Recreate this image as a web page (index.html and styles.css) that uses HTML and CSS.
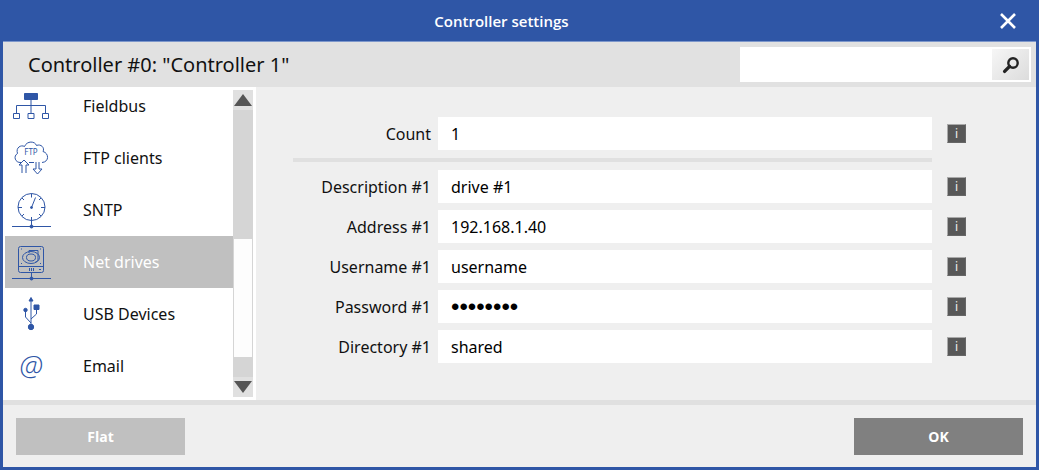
FILE: index.html
```html
<!DOCTYPE html>
<html lang="en">
<head>
    <meta charset="UTF-8">
    <meta name="viewport" content="width=device-width, initial-scale=1.0">
    <title>Controller settings</title>
    <link rel="stylesheet" href="styles.css">
</head>
<body>

<div class="window">
    <header class="titlebar">
        <span></span>
        <h1>Controller settings</h1>
        <button type="button" class="close" aria-label="Close">
            <svg width="18" height="18" viewBox="0 0 18 18"><path d="M2 2L16 16M16 2L2 16" stroke="#fff" stroke-width="2.6" fill="none"/></svg>
        </button>
    </header>

    <div class="subheader">
        <h2>Controller #0: "Controller 1"</h2>
        <form class="search" role="search">
            <input type="search" aria-label="Search">
            <button type="button" aria-label="Find">
                <svg width="18" height="18" viewBox="0 0 18 18" fill="none" stroke="#222"><circle cx="11" cy="7" r="4.7" stroke-width="2.4"/><path d="M7.6 10.4L2.6 15.4" stroke-width="3.4" stroke-linecap="round"/></svg>
            </button>
        </form>
    </div>

    <main class="content">
        <nav class="sidebar">
            <div class="menu">
                <a href="#fieldbus" class="item">
                    <svg class="icon" viewBox="0 0 40 40">
                        <path d="M13.5 7.500h13v6h-13z" fill="#2f56a6"/>
                        <path d="M20 13v14M5.500 27v-7.500h29V27M2.500 27.500h6v5h-6zM17 27.500h6v5h-6zM31.500 27.500h6v5h-6z"/>
                    </svg>
                    Fieldbus
                </a>
                <a href="#ftp" class="item">
                    <svg class="icon" viewBox="0 0 40 40">
                        <path d="M10 24.500C4 25 2 18 6.500 15.500C4.500 9.500 10 6.500 13.500 8.500C16 2.500 24 3 25.500 7.500C30 5.500 34 10 32 13.500C38 15 38.500 24 31 24.500M18 24.500h5"/>
                        <path d="M11 35v-8H8l5-5 5 5h-3v8M25 24v7h-3l4.500 5 4.500-5h-3v-7"/>
                        <text x="20" y="17" class="icon-text">FTP</text>
                    </svg>
                    FTP clients
                </a>
                <a href="#sntp" class="item">
                    <svg class="icon" viewBox="0 0 40 40">
                        <circle cx="20.500" cy="17" r="13.500"/>
                        <path d="M20.500 3.500v4M20.500 27v4M7 17.500h4M30 17.500h4M11 8l2 2M30 8l-2 2M11 26l2-2M30 26l-2-2M20.500 17.500l4-10M20.500 31v5M1 36.500h39"/>
                        <circle cx="20.500" cy="17.500" r="1" fill="#2f56a6"/>
                        <circle cx="20.500" cy="36.500" r="1.500" fill="#2f56a6"/>
                    </svg>
                    SNTP
                </a>
                <a href="#netdrives" class="item active">
                    <svg class="icon" viewBox="0 0 40 40">
                        <rect x="7.500" y="4.500" width="25" height="26" rx="2"/>
                        <path d="M7 24.500h26M18 11V8.500h9v10l-3 2M10 7h1M29 7h1M10 21.500h1M29 21.500h1"/>
                        <ellipse cx="20" cy="15.500" rx="8.500" ry="6"/>
                        <ellipse cx="20" cy="15.500" rx="4.500" ry="3.500"/>
                        <path d="M18.500 26v3M20.500 26v3M22.500 26v3M28 27.500h2M20.500 31v5M1 36.500h39"/>
                        <circle cx="20.500" cy="36.500" r="1.500" fill="#2f56a6"/>
                    </svg>
                    Net drives
                </a>
                <a href="#usb" class="item">
                    <svg class="icon" viewBox="0 0 40 40">
                        <path d="M20 6v26M20 29l-5.500-6v-7M20 25l5.500-5v-6"/>
                        <path d="M20 3.500l2 3.500h-4zM23 11h5v4.500h-5z" fill="#2f56a6"/>
                        <circle cx="14.500" cy="16" r="1.700" fill="#2f56a6"/>
                        <circle cx="20" cy="33" r="2.700" fill="#2f56a6"/>
                    </svg>
                    USB Devices
                </a>
                <a href="#email" class="item">
                    <svg class="icon" viewBox="0 0 40 40">
                        <text x="20" y="30" class="icon-at">@</text>
                    </svg>
                    Email
                </a>
            </div>
            <div class="scrollbar">
                <button type="button" aria-label="Scroll up"><svg width="18" height="12" viewBox="0 0 18 12"><path d="M9 0l9 12H0z" fill="#555"/></svg></button>
                <div class="track"><div class="thumb"></div></div>
                <button type="button" aria-label="Scroll down"><svg width="18" height="12" viewBox="0 0 18 12"><path d="M9 12L0 0h18z" fill="#555"/></svg></button>
            </div>
        </nav>

        <form class="settings">
            <label for="count">Count</label>
            <input type="text" id="count" value="1">
            <button type="button" class="info" aria-label="About count">i</button>

            <hr>

            <label for="description">Description #1</label>
            <input type="text" id="description" value="drive #1">
            <button type="button" class="info" aria-label="About description">i</button>

            <label for="address">Address #1</label>
            <input type="text" id="address" value="192.168.1.40">
            <button type="button" class="info" aria-label="About address">i</button>

            <label for="username">Username #1</label>
            <input type="text" id="username" value="username">
            <button type="button" class="info" aria-label="About username">i</button>

            <label for="password">Password #1</label>
            <input type="password" id="password" value="password">
            <button type="button" class="info" aria-label="About password">i</button>

            <label for="directory">Directory #1</label>
            <input type="text" id="directory" value="shared">
            <button type="button" class="info" aria-label="About directory">i</button>
        </form>
    </main>

    <footer class="footer">
        <button type="button" class="btn flat">Flat</button>
        <button type="button" class="btn ok">OK</button>
    </footer>
</div>

</body>
</html>
```
FILE: styles.css
```css
* {
    box-sizing: border-box;
}
body {
    margin: 0;
    font-family: "Noto Sans", sans-serif;
    font-size: 16px;
    color: #111;
}
button {
    font-family: inherit;
    border: none;
    padding: 0;
    cursor: pointer;
}
input {
    font-family: inherit;
    font-size: 16px;
    color: #000;
    border: none;
    outline: none;
    min-width: 0;
}
svg {
    display: block;
}
.window {
    display: flex;
    flex-direction: column;
    min-height: 100vh;
    background-color: #efefef;
    border: 3px solid #2f56a6;
    border-top: none;
}

/* Title bar */
.titlebar {
    display: grid;
    grid-template-columns: 1fr auto 1fr;
    align-items: center;
    height: 42px;
    background-color: #2f56a6;
    border-bottom: 1px solid #7d97cb;
    color: #fff;
}
.titlebar h1 {
    margin: 0;
    padding-right: 36px;
    font-family: "Open Sans", sans-serif;
    font-size: 15px;
    font-weight: 600;
}
.close {
    justify-self: end;
    margin-right: 19px;
    background: none;
}

/* Header with search */
.subheader {
    display: flex;
    align-items: center;
    justify-content: space-between;
    height: 45px;
    padding: 0 5px 0 25px;
    background-color: #e1e1e1;
}
.subheader h2 {
    margin: 0;
    font-size: 20px;
    font-weight: normal;
}
.search {
    display: flex;
    width: 29%;
    height: 35px;
    padding: 2px;
    background-color: #fff;
}
.search input {
    flex: 1;
    background: none;
}
.search button {
    display: grid;
    place-items: center;
    width: 37px;
    background: linear-gradient(135deg, #f6f6f6, #dcdcdc);
}

/* Sidebar */
.content {
    display: flex;
    flex: 1;
}
.sidebar {
    display: flex;
    width: 253px;
    height: 313px;
    padding: 0 3px 0 2px;
    background-color: #fff;
}
.menu {
    display: flex;
    flex: 1;
    flex-direction: column;
    justify-content: flex-end;
    padding-bottom: 8px;
    overflow: hidden;
}
.item {
    display: flex;
    flex: none;
    align-items: center;
    gap: 32px;
    height: 52px;
    padding-left: 6px;
    color: #111;
    text-decoration: none;
}
.item.active {
    background-color: #c0c0c0;
    color: #fff;
}
.icon {
    width: 40px;
    height: 40px;
    overflow: visible;
    fill: none;
    stroke: #2f56a6;
    stroke-width: 1;
}
.icon text {
    fill: #2f56a6;
    stroke: none;
    text-anchor: middle;
}
.icon-text {
    font-size: 8px;
}
.icon-at {
    font-family: "Open Sans", sans-serif;
    font-size: 28px;
    font-style: italic;
    font-weight: 300;
}
.scrollbar {
    display: flex;
    flex-direction: column;
    width: 20px;
    margin: 3px 0;
    background-color: #e0e0e0;
}
.scrollbar button {
    display: grid;
    place-items: center;
    height: 20px;
    background: none;
}
.track {
    flex: 1;
    padding: 0 1px;
    background-color: #d5d5d5;
}
.thumb {
    height: 118px;
    margin-top: 129px;
    background-color: #fdfdfd;
}

/* Settings form */
.settings {
    display: grid;
    flex: 1;
    grid-template-columns: 138px 1fr 19px;
    align-items: center;
    align-content: start;
    row-gap: 7px;
    padding: 30px 70px 30px 37px;
}
.settings label {
    text-align: right;
}
.settings input {
    height: 33px;
    margin: 0 15px 0 7px;
    padding: 0 13px;
    background-color: #fff;
}
.settings input[type="password"] {
    font-family: "Liberation Sans", sans-serif;
    font-size: 24px;
}
.settings hr {
    grid-column: 1 / -1;
    width: auto;
    height: 4px;
    margin: 1px 34px 1px 0;
    border: none;
    background-color: #e0e0e0;
}
.info {
    height: 19px;
    background-color: #585858;
    border: 1px solid #666;
    border-top-color: #aaa;
    border-left-color: #aaa;
    color: #eee;
    font-size: 12px;
    line-height: 16px;
}

/* Footer */
.footer {
    display: flex;
    align-items: center;
    justify-content: space-between;
    height: 67px;
    padding: 0 13px;
    border-top: 5px solid #e0e0e0;
}
.btn {
    width: 169px;
    height: 37px;
    color: #fff;
    font-family: "Open Sans", sans-serif;
    font-size: 14px;
    font-weight: bold;
}
.flat {
    background-color: #c0c0c0;
}
.ok {
    background-color: #808080;
}
```
